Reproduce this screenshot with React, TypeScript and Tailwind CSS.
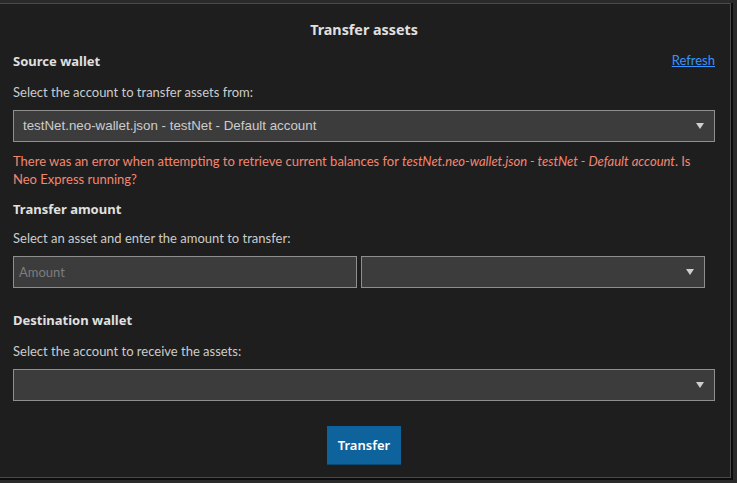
import React from 'react';

const font = { fontFamily: 'Lato, "Noto Sans", sans-serif' };
const headFont = { fontFamily: '"Noto Sans", "Open Sans", sans-serif' };

function Caret() {
  return (
    <svg width="8" height="6" viewBox="0 0 8 6" className="shrink-0">
      <path d="M0 0 H8 L4 6 Z" fill="#cfcfcf" />
    </svg>
  );
}

function Select({ value, className = '' }: { value?: string; className?: string }) {
  return (
    <div
      className={`h-[32px] flex items-center justify-between bg-[#3c3c3c] border border-[#8f8f8f] pl-[9px] pr-[10px] ${className}`}
    >
      <span className="text-[13.33px] text-[#cccccc]" style={{ fontFamily: '"Liberation Sans", Arial, sans-serif' }}>
        {value}
      </span>
      <Caret />
    </div>
  );
}

function Heading({ children, className = '' }: { children: React.ReactNode; className?: string }) {
  return (
    <h2 className={`font-bold text-[#e0e0e0] ${className}`} style={headFont}>
      {children}
    </h2>
  );
}

export default function App() {
  return (
    <div className="w-[737px] h-[483px] bg-[#2a2a2a] overflow-hidden" style={font}>
      <div className="mt-[3px] w-[733px] h-[477px] border-r-2 border-b-2 border-[#0c0c0c]">
        <div className="h-full bg-[#1e1e1e] border-t border-r border-b border-[#4a4a4a] pt-[17px] pl-[13px] pr-[15px] text-[13px] leading-[18px] text-[#cccccc]">
          <h1 className="text-center text-[14.3px] font-bold text-[#e0e0e0]" style={headFont}>
            Transfer assets
          </h1>

          <div className="mt-[13px] flex items-center justify-between">
            <Heading>Source wallet</Heading>
            <a href="#" className="text-[#3794ff] underline -mt-[3px]">Refresh</a>
          </div>
          <p className="mt-[13px]">Select the account to transfer assets from:</p>
          <Select className="mt-[9px]" value="testNet.neo-wallet.json - testNet - Default account" />
          <p className="mt-[10px] text-[#f48771]">
            There was an error when attempting to retrieve current balances for{' '}
            <i>testNet.neo-wallet.json - testNet - Default account</i>. Is Neo Express running?
          </p>

          <Heading className="mt-[12px]">Transfer amount</Heading>
          <p className="mt-[11px]">Select an asset and enter the amount to transfer:</p>
          <div className="mt-[9px] flex gap-[4px]">
            <div className="w-[344px] h-[32px] flex items-center bg-[#3c3c3c] border border-[#8f8f8f] px-[5px]">
              <span className="text-[#7d7d7d]">Amount</span>
            </div>
            <Select className="w-[344px]" />
          </div>

          <Heading className="mt-[23px]">Destination wallet</Heading>
          <p className="mt-[13px]">Select the account to receive the assets:</p>
          <Select className="mt-[9px]" />

          <div className="mt-[25px] flex justify-center">
            <button
              className="w-[74px] h-[39px] bg-[#0e639c] border-b border-[#0b4a75] text-white font-semibold text-[13px]"
              style={headFont}
            >
              Transfer
            </button>
          </div>
        </div>
      </div>
    </div>
  );
}
